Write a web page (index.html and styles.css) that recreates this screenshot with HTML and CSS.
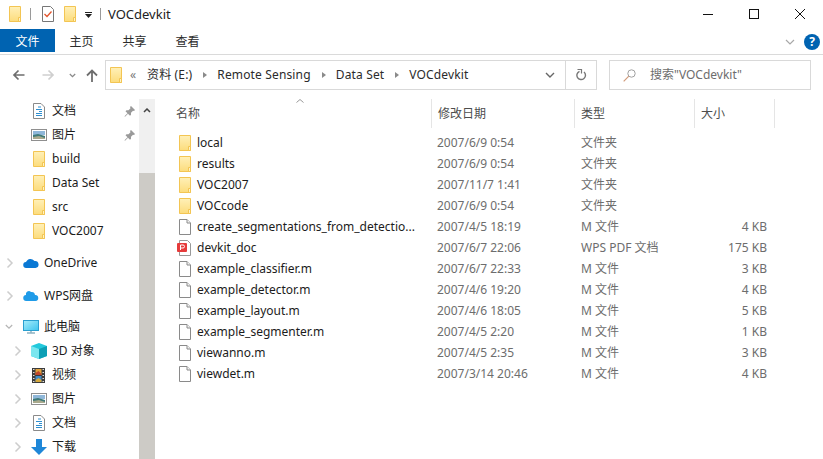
FILE: index.html
```html
<!DOCTYPE html>
<html lang="zh">
<head>
<meta charset="utf-8">
<title>VOCdevkit</title>
<link rel="stylesheet" href="styles.css">
</head>
<body>
<svg class="defs" width="0" height="0">
  <defs>
    <linearGradient id="fg" x1="0" y1="0" x2="0" y2="1"><stop offset="0" stop-color="#fff0b8"/><stop offset="1" stop-color="#fcdc7c"/></linearGradient>
    <linearGradient id="pc" x1="0" y1="0" x2="1" y2="1"><stop offset="0" stop-color="#a8ecfb"/><stop offset="1" stop-color="#3cc4ee"/></linearGradient>
    <symbol id="folder" viewBox="0 0 12 16"><path d="M.5.5h11v15H.5z" fill="url(#fg)" stroke="#f3c553"/><path d="M9.500 15.500v-4h2v4z" fill="#fff3c4" stroke="#f3c553"/></symbol>
    <symbol id="file" viewBox="0 0 12 16"><path d="M.5.5h7.500l3.500 3.500v11.500H.5z" fill="#fff" stroke="#8a8a8a"/><path d="M8 .5v3.500h3.500" fill="#f4f4f4" stroke="#8a8a8a"/></symbol>
    <symbol id="pic" viewBox="0 0 16 12"><rect x=".5" y=".5" width="15" height="11" fill="#fff" stroke="#8f8f8f"/><rect x="2" y="2" width="12" height="4" fill="#8fb7d9"/><path d="M2 6l5-1 7 2v3H2z" fill="#3f7a78"/><path d="M2 8l6-1 6 2v1H2z" fill="#a9a98d"/></symbol>
    <symbol id="doc" viewBox="0 0 12 16"><path d="M.5.5h7.500l3.500 3.500v11.500H.5z" fill="#fff" stroke="#8a8a8a"/><path d="M5 4h3M3 6.500h6M6 8.500h3M3 10.500h6M3 12.500h6" stroke="#2f8fd0"/></symbol>
    <symbol id="pin" viewBox="0 0 12 12"><path d="M7 1l4 4-1 1-1-.300-2 2 0 2-1 1-2-2-3 3-.500-.500 3-3-2-2 1-1 2 0 2-2L6 2z" fill="#9a9a9a"/></symbol>
    <symbol id="chev" viewBox="0 0 8 12"><path d="M1.500 1.500l4.500 4.500-4.500 4.500" fill="none" stroke="#cdcdcd" stroke-width="1.500"/></symbol>
  </defs>
</svg>

<div class="window">
  <header class="titlebar">
    <svg class="ic12 qa1"><use href="#folder"/></svg>
    <span class="vsep"></span>
    <svg class="ic12 qa2" viewBox="0 0 12 16"><path d="M.5.5h8l3 3v12H.5z" fill="#fff" stroke="#777"/><path d="M2.500 8l2.500 2.500 4.500-5" fill="none" stroke="#e2552d" stroke-width="1.300"/></svg>
    <svg class="ic12 qa3"><use href="#folder"/></svg>
    <svg class="qa-arrow" width="7" height="6" viewBox="0 0 7 6"><path d="M0 0h7v1H0zM0 2h7L3.500 6z" fill="#222"/></svg>
    <span class="vsep sep2"></span>
    <span class="wintitle">VOCdevkit</span>
    <div class="winctrls">
      <svg width="46" height="12" viewBox="0 0 46 12"><path d="M18 6.500h10" stroke="#111"/></svg>
      <svg width="46" height="12" viewBox="0 0 46 12"><rect x="18.500" y="1.500" width="9" height="9" fill="none" stroke="#111"/></svg>
      <svg width="46" height="12" viewBox="0 0 46 12"><path d="M18 1l10 10M28 1L18 11" stroke="#111" fill="none"/></svg>
    </div>
  </header>

  <nav class="ribbon">
    <a class="tab tab-file">文件</a>
    <a class="tab">主页</a>
    <a class="tab">共享</a>
    <a class="tab">查看</a>
    <svg class="rb-chev" width="10" height="6" viewBox="0 0 10 6"><path d="M1 1l4 4 4-4" fill="none" stroke="#a8a8a8" stroke-width="1.200"/></svg>
    <span class="help">?</span>
  </nav>

  <div class="addrrow">
    <svg class="navb" width="13" height="12" viewBox="0 0 13 12"><path d="M12.500 6H2M6.500 1.500L2 6l4.500 4.500" fill="none" stroke="#6e6e6e" stroke-width="1.700"/></svg>
    <svg class="navb nav2" width="13" height="12" viewBox="0 0 13 12"><path d="M.5 6H11M6.500 1.500L11 6l-4.500 4.500" fill="none" stroke="#cfcfcf" stroke-width="1.700"/></svg>
    <svg class="navb nav3" width="7" height="5" viewBox="0 0 7 5"><path d="M.8 1l2.700 2.700L6.200 1" fill="none" stroke="#8a8a8a" stroke-width="1.300"/></svg>
    <svg class="navb nav4" width="12" height="13" viewBox="0 0 12 13"><path d="M6 13V2M1 6.500L6 1.500l5 5" fill="none" stroke="#6e6e6e" stroke-width="1.800"/></svg>
    <div class="addr">
      <svg class="ic12 addr-folder"><use href="#folder"/></svg>
      <span class="crumb-more">«</span>
      <span class="crumb">资料 (E:)</span><i class="gt"></i>
      <span class="crumb">Remote Sensing</span><i class="gt"></i>
      <span class="crumb">Data Set</span><i class="gt"></i>
      <span class="crumb">VOCdevkit</span>
      <svg class="addr-drop" width="10" height="6" viewBox="0 0 10 6"><path d="M1 1l4 4 4-4" fill="none" stroke="#666" stroke-width="1.400"/></svg>
      <span class="addr-refresh"><svg width="11" height="12" viewBox="0 0 11 12"><path d="M3.500 2.300A4.300 4.300 0 1 0 8 3" fill="none" stroke="#777" stroke-width="1.400"/><path d="M1.500 .5h4v4" fill="none" stroke="#777" stroke-width="1.200"/></svg></span>
    </div>
    <div class="search">
      <svg width="13" height="13" viewBox="0 0 13 13"><circle cx="8.500" cy="4.500" r="3.700" fill="none" stroke="#a0a0a0"/><path d="M5.800 7.200L.7 12.300" stroke="#d09a7a" stroke-width="1.200"/></svg>
      <span>搜索"VOCdevkit"</span>
    </div>
  </div>

  <div class="body">
    <aside class="side">
      <div class="tree">
        <div class="node l2"><svg class="ic12"><use href="#doc"/></svg><span>文档</span><svg class="pin"><use href="#pin"/></svg></div>
        <div class="node l2"><svg class="ic16"><use href="#pic"/></svg><span>图片</span><svg class="pin"><use href="#pin"/></svg></div>
        <div class="node l2"><svg class="ic12"><use href="#folder"/></svg><span>build</span></div>
        <div class="node l2"><svg class="ic12"><use href="#folder"/></svg><span>Data Set</span></div>
        <div class="node l2"><svg class="ic12"><use href="#folder"/></svg><span>src</span></div>
        <div class="node l2"><svg class="ic12"><use href="#folder"/></svg><span>VOC2007</span></div>

        <div class="node l1 gap8"><svg class="tw"><use href="#chev"/></svg><svg class="ic16" viewBox="0 0 16 12"><path d="M3.500 11a3 3 0 0 1-.500-6A5 5 0 0 1 11.500 4 3.500 3.500 0 0 1 12.500 11z" fill="#0a78d4"/></svg><span>OneDrive</span></div>
        <div class="node l1 gap9"><svg class="tw"><use href="#chev"/></svg><svg class="ic16" viewBox="0 0 16 12"><path d="M3.500 11a3 3 0 0 1-.500-6 3 3 0 0 1 5-3 3.500 3.500 0 0 1 4 3 3 3 0 0 1 .500 6z" fill="#1f9be8"/></svg><span>WPS网盘</span></div>
        <div class="node l1 gap7"><svg class="tw tw-open" width="8" height="12" viewBox="0 0 10 12"><path d="M1 3.500l4 4 4-4" fill="none" stroke="#b5b5b5" stroke-width="1.500"/></svg><svg class="ic16" viewBox="0 0 16 14"><rect x=".5" y=".5" width="15" height="10" fill="url(#pc)" stroke="#2a9fd0"/><path d="M4 13h8M8 11v2" stroke="#8fb3c2" stroke-width="1.500"/></svg><span>此电脑</span></div>
        <div class="node l2"><svg class="tw"><use href="#chev"/></svg><svg class="ic16" viewBox="0 0 16 16"><path d="M8 0l8 3v10l-8 3-8-3V3z" fill="#22c9dc"/><path d="M8 6l8-3v10l-8 3z" fill="#0d9fb5"/><path d="M0 3l8 3v10L0 13z" fill="#7ae6ef"/></svg><span>3D 对象</span></div>
        <div class="node l2"><svg class="tw"><use href="#chev"/></svg><svg class="ic-film" viewBox="0 0 13 15"><rect width="13" height="15" fill="#3c3c3c"/><path d="M1 1.500h1.500M1 4.500h1.500M1 7.500h1.500M1 10.500h1.500M1 13.500h1.500M10.500 1.500H12M10.500 4.500H12M10.500 7.500H12M10.500 10.500H12M10.500 13.500H12" stroke="#ddd"/><rect x="3.500" y="1" width="6" height="6" fill="#e0a13a"/><path d="M3.500 5l3-2 3 3v1h-6z" fill="#c0452c"/><rect x="3.500" y="8" width="6" height="6" fill="#3d8bc9"/><path d="M3.500 12l3-2 3 2v2h-6z" fill="#d6a83c"/></svg><span>视频</span></div>
        <div class="node l2"><svg class="tw"><use href="#chev"/></svg><svg class="ic16"><use href="#pic"/></svg><span>图片</span></div>
        <div class="node l2"><svg class="tw"><use href="#chev"/></svg><svg class="ic12"><use href="#doc"/></svg><span>文档</span></div>
        <div class="node l2"><svg class="tw"><use href="#chev"/></svg><svg class="ic16" viewBox="0 0 16 16"><path d="M5 0h6v8h5l-8 8-8-8h5z" fill="#1f87d8"/></svg><span>下载</span></div>
      </div>
      <div class="scroll"><svg width="8" height="5" viewBox="0 0 8 5"><path d="M1 4l3-3 3 3" fill="none" stroke="#444" stroke-width="1.500"/></svg><div class="thumb"></div></div>
    </aside>

    <main class="list">
      <div class="head">
        <div class="hc hc-name">名称<svg class="sort" width="8" height="4" viewBox="0 0 8 4"><path d="M.5 3.500L4 .5l3.500 3" fill="none" stroke="#999"/></svg></div>
        <div class="hc">修改日期</div>
        <div class="hc">类型</div>
        <div class="hc">大小</div>
        <div class="hc hc-end"></div>
      </div>
      <div class="row"><div class="name"><svg class="ic12"><use href="#folder"/></svg><span>local</span></div><div class="date">2007/6/9 0:54</div><div class="type">文件夹</div><div class="size"></div></div>
      <div class="row"><div class="name"><svg class="ic12"><use href="#folder"/></svg><span>results</span></div><div class="date">2007/6/9 0:54</div><div class="type">文件夹</div><div class="size"></div></div>
      <div class="row"><div class="name"><svg class="ic12"><use href="#folder"/></svg><span>VOC2007</span></div><div class="date">2007/11/7 1:41</div><div class="type">文件夹</div><div class="size"></div></div>
      <div class="row"><div class="name"><svg class="ic12"><use href="#folder"/></svg><span>VOCcode</span></div><div class="date">2007/6/9 0:54</div><div class="type">文件夹</div><div class="size"></div></div>
      <div class="row"><div class="name"><svg class="ic12"><use href="#file"/></svg><span>create_segmentations_from_detectio...</span></div><div class="date">2007/4/5 18:19</div><div class="type">M 文件</div><div class="size">4 KB</div></div>
      <div class="row"><div class="name"><svg class="ic12 ic-over" viewBox="0 0 12 16"><path d="M.5.5h8l3 3v12H.5z" fill="#fff" stroke="#999"/><rect x="-2" y="3" width="10" height="9" rx="1" fill="#e63b3b"/><path d="M1.500 10V5H4a1.300 1.300 0 0 1 0 3H1.500" fill="none" stroke="#fff"/></svg><span>devkit_doc</span></div><div class="date">2007/6/7 22:06</div><div class="type">WPS PDF 文档</div><div class="size">175 KB</div></div>
      <div class="row"><div class="name"><svg class="ic12"><use href="#file"/></svg><span>example_classifier.m</span></div><div class="date">2007/6/7 22:33</div><div class="type">M 文件</div><div class="size">3 KB</div></div>
      <div class="row"><div class="name"><svg class="ic12"><use href="#file"/></svg><span>example_detector.m</span></div><div class="date">2007/4/6 19:20</div><div class="type">M 文件</div><div class="size">4 KB</div></div>
      <div class="row"><div class="name"><svg class="ic12"><use href="#file"/></svg><span>example_layout.m</span></div><div class="date">2007/4/6 18:05</div><div class="type">M 文件</div><div class="size">5 KB</div></div>
      <div class="row"><div class="name"><svg class="ic12"><use href="#file"/></svg><span>example_segmenter.m</span></div><div class="date">2007/4/5 2:20</div><div class="type">M 文件</div><div class="size">1 KB</div></div>
      <div class="row"><div class="name"><svg class="ic12"><use href="#file"/></svg><span>viewanno.m</span></div><div class="date">2007/4/5 2:35</div><div class="type">M 文件</div><div class="size">3 KB</div></div>
      <div class="row"><div class="name"><svg class="ic12"><use href="#file"/></svg><span>viewdet.m</span></div><div class="date">2007/3/14 20:46</div><div class="type">M 文件</div><div class="size">4 KB</div></div>
    </main>
  </div>
</div>
</body>
</html>
```

FILE: styles.css
```css
* { box-sizing: border-box; }
html, body { margin: 0; height: 100%; overflow: hidden; background: #fff; }
body { font: 12px/16px "Noto Sans", "Noto Sans CJK SC", sans-serif; color: #1c1c1c; }
.defs { display: block; height: 0; }
svg { flex: none; display: block; }
.window { width: 823px; height: 459px; display: flex; flex-direction: column; overflow: hidden; }

.ic12 { width: 12px; height: 16px; }
.ic16 { width: 16px; height: 16px; }
.ic-film { width: 13px; height: 15px; }
.ic-over { overflow: visible; }

/* Title bar */
.titlebar { height: 29px; display: flex; align-items: center; padding: 0 0 2px 9px; }
.vsep { width: 1px; height: 12px; background: #9a9a9a; margin-left: 9px; }
.qa2 { margin-left: 11px; }
.qa3 { margin-left: 10px; }
.qa-arrow { margin-left: 9px; margin-top: 2px; }
.sep2 { margin-left: 8px; }
.wintitle { margin-left: 7px; font-size: 13px; color: #222; }
.winctrls { margin-left: auto; display: flex; }

/* Ribbon */
.ribbon { height: 26px; display: flex; align-items: flex-start; border-bottom: 1px solid #dadada; padding-right: 3px; }
.tab { width: 53px; height: 23px; line-height: 25px; text-align: center; color: #2b2b2b; }
.tab-file { width: 55px; background: #0063b1; color: #fff; }
.rb-chev { margin: 10px 9px 0 auto; }
.help { width: 16px; height: 16px; margin-top: 5px; border-radius: 50%; background: #0063b1; color: #fff; font-weight: 700; font-size: 12px; line-height: 16px; text-align: center; }

/* Address row */
.addrrow { height: 44px; display: flex; align-items: center; padding: 0 12px 4px 12px; }
.nav2 { margin-left: 17px; }
.nav3 { margin-left: 14px; }
.nav4 { margin-left: 10px; }
.addr { margin-left: 7px; width: 492px; flex: none; height: 30px; border: 1px solid #d9d9d9; display: flex; align-items: center; padding-left: 4px; color: #2b2b2b; }
.crumb-more { margin-left: 8px; color: #777; width: 17px; }
.crumb { letter-spacing: .15px; }
.gt { width: 0; height: 0; margin: 0 10px 0 11px; border-left: 4px solid #8a8a8a; border-top: 3px solid transparent; border-bottom: 3px solid transparent; }
.addr-drop { margin-left: auto; margin-right: 10px; }
.addr-refresh { width: 31px; height: 28px; border-left: 1px solid #d9d9d9; display: flex; align-items: center; justify-content: center; }
.search { margin-left: 12px; flex: 1; height: 30px; border: 1px solid #d9d9d9; display: flex; align-items: center; padding-left: 13px; gap: 14px; color: #6d6d6d; }

/* Body */
.body { flex: 1; min-height: 0; display: flex; }
.side { width: 155px; display: flex; flex: none; }
.tree { width: 139px; }
.node { height: 24px; display: flex; align-items: center; position: relative; }
.node > span { margin-left: 7px; color: #1c1c1c; }
.node > .ic16 + span { margin-left: 5px; }
.l1 { padding-left: 23px; }
.l2 { padding-left: 33px; }
.l2 > .ic16 { margin-left: -2px; }
.l2 > .ic-film { margin-left: -1px; }
.tw { width: 8px; height: 12px; position: absolute; left: 6px; top: 6px; }
.l2 > .tw { left: 14px; }
.tw-open { left: 5px; }
.pin { position: absolute; left: 124px; top: 6px; width: 12px; height: 12px; }
.gap8 { margin-top: 8px; }
.gap9 { margin-top: 9px; }
.gap7 { margin-top: 7px; }
.scroll { width: 16px; background: #f0f0f0; display: flex; flex-direction: column; align-items: center; padding-top: 9px; }
.thumb { align-self: stretch; flex: 1; margin-top: 60px; background: #cdcbc6; }

/* File list */
.list { flex: 1; min-width: 0; }
.head, .row { display: grid; grid-template-columns: 277px 143px 120px 80px 1fr; }
.head { height: 27px; margin-bottom: 6px; }
.hc { line-height: 29px; padding-left: 6px; border-right: 1px solid #e5e5e5; position: relative; color: #4d4d4d; }
.hc-name { padding-left: 21px; }
.hc-end { border: 0; }
.sort { position: absolute; left: 141px; top: 0; }
.row { height: 21px; align-items: center; color: #6d6d6d; }
.name { display: flex; align-items: center; gap: 6px; padding: 0 0 0 24px; min-width: 0; color: #1c1c1c; }
.name span { white-space: nowrap; }
.date { padding-left: 5px; }
.type { padding-left: 6px; }
.size { text-align: right; padding-right: 8px; }
```
